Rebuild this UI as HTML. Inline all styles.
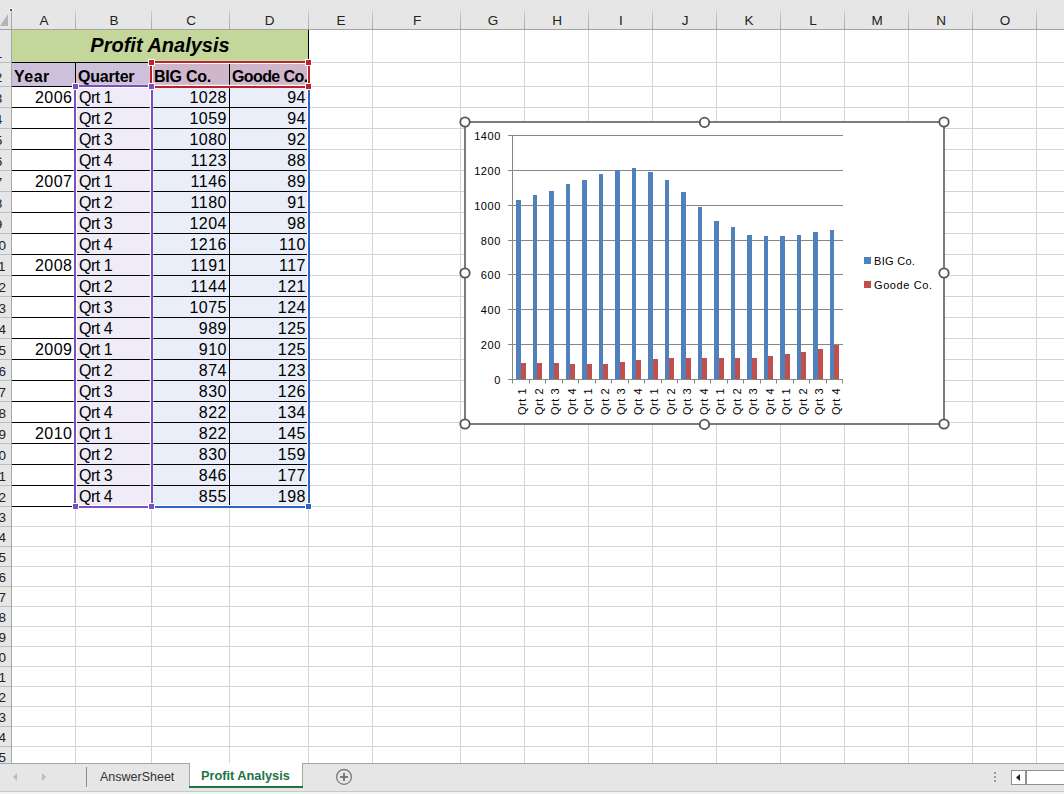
<!DOCTYPE html>
<html><head><meta charset="utf-8"><style>
html,body{margin:0;padding:0;}
body{width:1064px;height:794px;position:relative;overflow:hidden;background:#fff;font-family:"Liberation Sans",sans-serif;}
body>div{position:absolute;box-sizing:content-box;}
.t{white-space:nowrap;color:#000;line-height:1.15;}
.ch{font-size:13.5px;text-align:center;color:#222;}
.rh{font-size:13.5px;text-align:center;color:#222;}
.ax{font-family:"Liberation Sans",sans-serif;font-size:11px;letter-spacing:0.3px;fill:#000;}
.ay{font-family:"Liberation Sans",sans-serif;font-size:11px;letter-spacing:0.6px;fill:#000;}
.axl{font-family:"Liberation Sans",sans-serif;font-size:11px;letter-spacing:0.5px;fill:#000;}
</style></head><body>
<div style="left:0px;top:0px;width:1064px;height:29px;background:#e6e6e6"></div>
<div style="left:0px;top:29px;width:1064px;height:1px;background:#a3a3a3"></div>
<svg style="position:absolute;left:0;top:0" width="11" height="29"><polygon points="0,26 8,14 8,26" fill="#b4b4b4"/></svg>
<div style="left:0px;top:30px;width:11px;height:733px;background:#e6e6e6"></div>
<div style="left:11px;top:10px;width:1px;height:753px;background:#a6a6a6"></div>
<div style="left:10px;top:9px;width:2px;height:2px;background:#222;border-radius:50%;box-shadow:0 0 0 1px rgba(255,255,255,0.6)"></div>
<div style="left:75px;top:10px;width:1px;height:19px;background:linear-gradient(#d0d0d0,#a8a8a8)"></div>
<div style="left:151px;top:10px;width:1px;height:19px;background:linear-gradient(#d0d0d0,#a8a8a8)"></div>
<div style="left:229px;top:10px;width:1px;height:19px;background:linear-gradient(#d0d0d0,#a8a8a8)"></div>
<div style="left:308px;top:10px;width:1px;height:19px;background:linear-gradient(#d0d0d0,#a8a8a8)"></div>
<div style="left:372px;top:10px;width:1px;height:19px;background:linear-gradient(#d0d0d0,#a8a8a8)"></div>
<div style="left:460px;top:10px;width:1px;height:19px;background:linear-gradient(#d0d0d0,#a8a8a8)"></div>
<div style="left:524px;top:10px;width:1px;height:19px;background:linear-gradient(#d0d0d0,#a8a8a8)"></div>
<div style="left:588px;top:10px;width:1px;height:19px;background:linear-gradient(#d0d0d0,#a8a8a8)"></div>
<div style="left:652px;top:10px;width:1px;height:19px;background:linear-gradient(#d0d0d0,#a8a8a8)"></div>
<div style="left:716px;top:10px;width:1px;height:19px;background:linear-gradient(#d0d0d0,#a8a8a8)"></div>
<div style="left:780px;top:10px;width:1px;height:19px;background:linear-gradient(#d0d0d0,#a8a8a8)"></div>
<div style="left:844px;top:10px;width:1px;height:19px;background:linear-gradient(#d0d0d0,#a8a8a8)"></div>
<div style="left:908px;top:10px;width:1px;height:19px;background:linear-gradient(#d0d0d0,#a8a8a8)"></div>
<div style="left:972px;top:10px;width:1px;height:19px;background:linear-gradient(#d0d0d0,#a8a8a8)"></div>
<div style="left:1036px;top:10px;width:1px;height:19px;background:linear-gradient(#d0d0d0,#a8a8a8)"></div>
<div class="t ch" style="left:24.0px;top:13px;width:40px">A</div>
<div class="t ch" style="left:94.0px;top:13px;width:40px">B</div>
<div class="t ch" style="left:171.0px;top:13px;width:40px">C</div>
<div class="t ch" style="left:249.5px;top:13px;width:40px">D</div>
<div class="t ch" style="left:321.0px;top:13px;width:40px">E</div>
<div class="t ch" style="left:397.0px;top:13px;width:40px">F</div>
<div class="t ch" style="left:473.0px;top:13px;width:40px">G</div>
<div class="t ch" style="left:537.0px;top:13px;width:40px">H</div>
<div class="t ch" style="left:601.0px;top:13px;width:40px">I</div>
<div class="t ch" style="left:665.0px;top:13px;width:40px">J</div>
<div class="t ch" style="left:729.0px;top:13px;width:40px">K</div>
<div class="t ch" style="left:793.0px;top:13px;width:40px">L</div>
<div class="t ch" style="left:857.0px;top:13px;width:40px">M</div>
<div class="t ch" style="left:921.0px;top:13px;width:40px">N</div>
<div class="t ch" style="left:985.0px;top:13px;width:40px">O</div>
<div style="left:0px;top:62px;width:11px;height:1px;background:#bdbdbd"></div>
<div class="t rh" style="left:-21.5px;top:46px;width:40px">1</div>
<div style="left:0px;top:86px;width:11px;height:1px;background:#bdbdbd"></div>
<div class="t rh" style="left:-21.5px;top:70px;width:40px">2</div>
<div style="left:0px;top:107px;width:11px;height:1px;background:#bdbdbd"></div>
<div class="t rh" style="left:-21.5px;top:91px;width:40px">3</div>
<div style="left:0px;top:128px;width:11px;height:1px;background:#bdbdbd"></div>
<div class="t rh" style="left:-21.5px;top:112px;width:40px">4</div>
<div style="left:0px;top:149px;width:11px;height:1px;background:#bdbdbd"></div>
<div class="t rh" style="left:-21.5px;top:133px;width:40px">5</div>
<div style="left:0px;top:170px;width:11px;height:1px;background:#bdbdbd"></div>
<div class="t rh" style="left:-21.5px;top:154px;width:40px">6</div>
<div style="left:0px;top:191px;width:11px;height:1px;background:#bdbdbd"></div>
<div class="t rh" style="left:-21.5px;top:175px;width:40px">7</div>
<div style="left:0px;top:212px;width:11px;height:1px;background:#bdbdbd"></div>
<div class="t rh" style="left:-21.5px;top:196px;width:40px">8</div>
<div style="left:0px;top:233px;width:11px;height:1px;background:#bdbdbd"></div>
<div class="t rh" style="left:-21.5px;top:217px;width:40px">9</div>
<div style="left:0px;top:254px;width:11px;height:1px;background:#bdbdbd"></div>
<div class="t rh" style="left:-21.5px;top:238px;width:40px">10</div>
<div style="left:0px;top:275px;width:11px;height:1px;background:#bdbdbd"></div>
<div class="t rh" style="left:-21.5px;top:259px;width:40px">11</div>
<div style="left:0px;top:296px;width:11px;height:1px;background:#bdbdbd"></div>
<div class="t rh" style="left:-21.5px;top:280px;width:40px">12</div>
<div style="left:0px;top:317px;width:11px;height:1px;background:#bdbdbd"></div>
<div class="t rh" style="left:-21.5px;top:301px;width:40px">13</div>
<div style="left:0px;top:338px;width:11px;height:1px;background:#bdbdbd"></div>
<div class="t rh" style="left:-21.5px;top:322px;width:40px">14</div>
<div style="left:0px;top:359px;width:11px;height:1px;background:#bdbdbd"></div>
<div class="t rh" style="left:-21.5px;top:343px;width:40px">15</div>
<div style="left:0px;top:380px;width:11px;height:1px;background:#bdbdbd"></div>
<div class="t rh" style="left:-21.5px;top:364px;width:40px">16</div>
<div style="left:0px;top:401px;width:11px;height:1px;background:#bdbdbd"></div>
<div class="t rh" style="left:-21.5px;top:385px;width:40px">17</div>
<div style="left:0px;top:422px;width:11px;height:1px;background:#bdbdbd"></div>
<div class="t rh" style="left:-21.5px;top:406px;width:40px">18</div>
<div style="left:0px;top:443px;width:11px;height:1px;background:#bdbdbd"></div>
<div class="t rh" style="left:-21.5px;top:427px;width:40px">19</div>
<div style="left:0px;top:464px;width:11px;height:1px;background:#bdbdbd"></div>
<div class="t rh" style="left:-21.5px;top:448px;width:40px">20</div>
<div style="left:0px;top:485px;width:11px;height:1px;background:#bdbdbd"></div>
<div class="t rh" style="left:-21.5px;top:469px;width:40px">21</div>
<div style="left:0px;top:506px;width:11px;height:1px;background:#bdbdbd"></div>
<div class="t rh" style="left:-21.5px;top:490px;width:40px">22</div>
<div style="left:0px;top:526px;width:11px;height:1px;background:#bdbdbd"></div>
<div class="t rh" style="left:-21.5px;top:510px;width:40px">23</div>
<div style="left:0px;top:546px;width:11px;height:1px;background:#bdbdbd"></div>
<div class="t rh" style="left:-21.5px;top:530px;width:40px">24</div>
<div style="left:0px;top:566px;width:11px;height:1px;background:#bdbdbd"></div>
<div class="t rh" style="left:-21.5px;top:550px;width:40px">25</div>
<div style="left:0px;top:586px;width:11px;height:1px;background:#bdbdbd"></div>
<div class="t rh" style="left:-21.5px;top:570px;width:40px">26</div>
<div style="left:0px;top:606px;width:11px;height:1px;background:#bdbdbd"></div>
<div class="t rh" style="left:-21.5px;top:590px;width:40px">27</div>
<div style="left:0px;top:626px;width:11px;height:1px;background:#bdbdbd"></div>
<div class="t rh" style="left:-21.5px;top:610px;width:40px">28</div>
<div style="left:0px;top:646px;width:11px;height:1px;background:#bdbdbd"></div>
<div class="t rh" style="left:-21.5px;top:630px;width:40px">29</div>
<div style="left:0px;top:666px;width:11px;height:1px;background:#bdbdbd"></div>
<div class="t rh" style="left:-21.5px;top:650px;width:40px">30</div>
<div style="left:0px;top:686px;width:11px;height:1px;background:#bdbdbd"></div>
<div class="t rh" style="left:-21.5px;top:670px;width:40px">31</div>
<div style="left:0px;top:706px;width:11px;height:1px;background:#bdbdbd"></div>
<div class="t rh" style="left:-21.5px;top:690px;width:40px">32</div>
<div style="left:0px;top:726px;width:11px;height:1px;background:#bdbdbd"></div>
<div class="t rh" style="left:-21.5px;top:710px;width:40px">33</div>
<div style="left:0px;top:746px;width:11px;height:1px;background:#bdbdbd"></div>
<div class="t rh" style="left:-21.5px;top:730px;width:40px">34</div>
<div class="t rh" style="left:-21.5px;top:750px;width:40px">35</div>
<div class="t rh" style="left:-21.5px;top:770px;width:40px">36</div>
<div class="t rh" style="left:-21.5px;top:790px;width:40px">37</div>
<div style="left:12px;top:62px;width:1052px;height:1px;background:#d4d4d4"></div>
<div style="left:12px;top:86px;width:1052px;height:1px;background:#d4d4d4"></div>
<div style="left:12px;top:107px;width:1052px;height:1px;background:#d4d4d4"></div>
<div style="left:12px;top:128px;width:1052px;height:1px;background:#d4d4d4"></div>
<div style="left:12px;top:149px;width:1052px;height:1px;background:#d4d4d4"></div>
<div style="left:12px;top:170px;width:1052px;height:1px;background:#d4d4d4"></div>
<div style="left:12px;top:191px;width:1052px;height:1px;background:#d4d4d4"></div>
<div style="left:12px;top:212px;width:1052px;height:1px;background:#d4d4d4"></div>
<div style="left:12px;top:233px;width:1052px;height:1px;background:#d4d4d4"></div>
<div style="left:12px;top:254px;width:1052px;height:1px;background:#d4d4d4"></div>
<div style="left:12px;top:275px;width:1052px;height:1px;background:#d4d4d4"></div>
<div style="left:12px;top:296px;width:1052px;height:1px;background:#d4d4d4"></div>
<div style="left:12px;top:317px;width:1052px;height:1px;background:#d4d4d4"></div>
<div style="left:12px;top:338px;width:1052px;height:1px;background:#d4d4d4"></div>
<div style="left:12px;top:359px;width:1052px;height:1px;background:#d4d4d4"></div>
<div style="left:12px;top:380px;width:1052px;height:1px;background:#d4d4d4"></div>
<div style="left:12px;top:401px;width:1052px;height:1px;background:#d4d4d4"></div>
<div style="left:12px;top:422px;width:1052px;height:1px;background:#d4d4d4"></div>
<div style="left:12px;top:443px;width:1052px;height:1px;background:#d4d4d4"></div>
<div style="left:12px;top:464px;width:1052px;height:1px;background:#d4d4d4"></div>
<div style="left:12px;top:485px;width:1052px;height:1px;background:#d4d4d4"></div>
<div style="left:12px;top:506px;width:1052px;height:1px;background:#d4d4d4"></div>
<div style="left:12px;top:526px;width:1052px;height:1px;background:#d4d4d4"></div>
<div style="left:12px;top:546px;width:1052px;height:1px;background:#d4d4d4"></div>
<div style="left:12px;top:566px;width:1052px;height:1px;background:#d4d4d4"></div>
<div style="left:12px;top:586px;width:1052px;height:1px;background:#d4d4d4"></div>
<div style="left:12px;top:606px;width:1052px;height:1px;background:#d4d4d4"></div>
<div style="left:12px;top:626px;width:1052px;height:1px;background:#d4d4d4"></div>
<div style="left:12px;top:646px;width:1052px;height:1px;background:#d4d4d4"></div>
<div style="left:12px;top:666px;width:1052px;height:1px;background:#d4d4d4"></div>
<div style="left:12px;top:686px;width:1052px;height:1px;background:#d4d4d4"></div>
<div style="left:12px;top:706px;width:1052px;height:1px;background:#d4d4d4"></div>
<div style="left:12px;top:726px;width:1052px;height:1px;background:#d4d4d4"></div>
<div style="left:12px;top:746px;width:1052px;height:1px;background:#d4d4d4"></div>
<div style="left:75px;top:30px;width:1px;height:733px;background:#d4d4d4"></div>
<div style="left:151px;top:30px;width:1px;height:733px;background:#d4d4d4"></div>
<div style="left:229px;top:30px;width:1px;height:733px;background:#d4d4d4"></div>
<div style="left:308px;top:30px;width:1px;height:733px;background:#d4d4d4"></div>
<div style="left:372px;top:30px;width:1px;height:733px;background:#d4d4d4"></div>
<div style="left:460px;top:30px;width:1px;height:733px;background:#d4d4d4"></div>
<div style="left:524px;top:30px;width:1px;height:733px;background:#d4d4d4"></div>
<div style="left:588px;top:30px;width:1px;height:733px;background:#d4d4d4"></div>
<div style="left:652px;top:30px;width:1px;height:733px;background:#d4d4d4"></div>
<div style="left:716px;top:30px;width:1px;height:733px;background:#d4d4d4"></div>
<div style="left:780px;top:30px;width:1px;height:733px;background:#d4d4d4"></div>
<div style="left:844px;top:30px;width:1px;height:733px;background:#d4d4d4"></div>
<div style="left:908px;top:30px;width:1px;height:733px;background:#d4d4d4"></div>
<div style="left:972px;top:30px;width:1px;height:733px;background:#d4d4d4"></div>
<div style="left:1036px;top:30px;width:1px;height:733px;background:#d4d4d4"></div>
<div style="left:12px;top:30px;width:296px;height:32px;background:#c4d79b"></div>
<div style="left:308px;top:30px;width:1px;height:33px;background:#000"></div>
<div style="left:12px;top:62px;width:297px;height:1px;background:#000"></div>
<div style="left:12px;top:63px;width:139px;height:23px;background:#ccc0da"></div>
<div style="left:152px;top:63px;width:156px;height:23px;background:#cfb6cb"></div>
<div style="left:12px;top:87px;width:63px;height:419px;background:#fff"></div>
<div style="left:76px;top:87px;width:75px;height:419px;background:#efebf7"></div>
<div style="left:152px;top:87px;width:156px;height:419px;background:#e9eef9"></div>
<div style="left:12px;top:86px;width:297px;height:1px;background:#000"></div>
<div style="left:12px;top:107px;width:297px;height:1px;background:#000"></div>
<div style="left:12px;top:128px;width:297px;height:1px;background:#000"></div>
<div style="left:12px;top:149px;width:297px;height:1px;background:#000"></div>
<div style="left:12px;top:170px;width:297px;height:1px;background:#000"></div>
<div style="left:12px;top:191px;width:297px;height:1px;background:#000"></div>
<div style="left:12px;top:212px;width:297px;height:1px;background:#000"></div>
<div style="left:12px;top:233px;width:297px;height:1px;background:#000"></div>
<div style="left:12px;top:254px;width:297px;height:1px;background:#000"></div>
<div style="left:12px;top:275px;width:297px;height:1px;background:#000"></div>
<div style="left:12px;top:296px;width:297px;height:1px;background:#000"></div>
<div style="left:12px;top:317px;width:297px;height:1px;background:#000"></div>
<div style="left:12px;top:338px;width:297px;height:1px;background:#000"></div>
<div style="left:12px;top:359px;width:297px;height:1px;background:#000"></div>
<div style="left:12px;top:380px;width:297px;height:1px;background:#000"></div>
<div style="left:12px;top:401px;width:297px;height:1px;background:#000"></div>
<div style="left:12px;top:422px;width:297px;height:1px;background:#000"></div>
<div style="left:12px;top:443px;width:297px;height:1px;background:#000"></div>
<div style="left:12px;top:464px;width:297px;height:1px;background:#000"></div>
<div style="left:12px;top:485px;width:297px;height:1px;background:#000"></div>
<div style="left:12px;top:506px;width:297px;height:1px;background:#000"></div>
<div style="left:75px;top:62px;width:1px;height:445px;background:#000"></div>
<div style="left:151px;top:62px;width:1px;height:445px;background:#000"></div>
<div style="left:229px;top:62px;width:1px;height:445px;background:#000"></div>
<div style="left:308px;top:62px;width:1px;height:445px;background:#000"></div>
<div class="t" style="left:12px;top:34px;width:296px;text-align:center;font-weight:bold;font-style:italic;font-size:20px">Profit Analysis</div>
<div class="t" style="left:14px;top:68px;font-weight:bold;font-size:16px;letter-spacing:0.5px">Year</div>
<div class="t" style="left:78px;top:68px;font-weight:bold;font-size:16px;letter-spacing:-0.2px">Quarter</div>
<div class="t" style="left:154px;top:68px;font-weight:bold;font-size:16px;letter-spacing:-0.25px">BIG Co.</div>
<div class="t" style="left:232px;top:68px;font-weight:bold;font-size:16px;letter-spacing:-0.6px">Goode Co.</div>
<div class="t" style="left:12px;top:89px;font-size:16px;width:60.5px;text-align:right;letter-spacing:0.5px">2006</div>
<div class="t" style="left:79px;top:89px;font-size:16px;letter-spacing:-0.45px">Qrt 1</div>
<div class="t" style="left:152px;top:89px;font-size:16px;width:75px;text-align:right;letter-spacing:0.5px">1028</div>
<div class="t" style="left:230px;top:89px;font-size:16px;width:76px;text-align:right;letter-spacing:0.5px">94</div>
<div class="t" style="left:79px;top:110px;font-size:16px;letter-spacing:-0.45px">Qrt 2</div>
<div class="t" style="left:152px;top:110px;font-size:16px;width:75px;text-align:right;letter-spacing:0.5px">1059</div>
<div class="t" style="left:230px;top:110px;font-size:16px;width:76px;text-align:right;letter-spacing:0.5px">94</div>
<div class="t" style="left:79px;top:131px;font-size:16px;letter-spacing:-0.45px">Qrt 3</div>
<div class="t" style="left:152px;top:131px;font-size:16px;width:75px;text-align:right;letter-spacing:0.5px">1080</div>
<div class="t" style="left:230px;top:131px;font-size:16px;width:76px;text-align:right;letter-spacing:0.5px">92</div>
<div class="t" style="left:79px;top:152px;font-size:16px;letter-spacing:-0.45px">Qrt 4</div>
<div class="t" style="left:152px;top:152px;font-size:16px;width:75px;text-align:right;letter-spacing:0.5px">1123</div>
<div class="t" style="left:230px;top:152px;font-size:16px;width:76px;text-align:right;letter-spacing:0.5px">88</div>
<div class="t" style="left:12px;top:173px;font-size:16px;width:60.5px;text-align:right;letter-spacing:0.5px">2007</div>
<div class="t" style="left:79px;top:173px;font-size:16px;letter-spacing:-0.45px">Qrt 1</div>
<div class="t" style="left:152px;top:173px;font-size:16px;width:75px;text-align:right;letter-spacing:0.5px">1146</div>
<div class="t" style="left:230px;top:173px;font-size:16px;width:76px;text-align:right;letter-spacing:0.5px">89</div>
<div class="t" style="left:79px;top:194px;font-size:16px;letter-spacing:-0.45px">Qrt 2</div>
<div class="t" style="left:152px;top:194px;font-size:16px;width:75px;text-align:right;letter-spacing:0.5px">1180</div>
<div class="t" style="left:230px;top:194px;font-size:16px;width:76px;text-align:right;letter-spacing:0.5px">91</div>
<div class="t" style="left:79px;top:215px;font-size:16px;letter-spacing:-0.45px">Qrt 3</div>
<div class="t" style="left:152px;top:215px;font-size:16px;width:75px;text-align:right;letter-spacing:0.5px">1204</div>
<div class="t" style="left:230px;top:215px;font-size:16px;width:76px;text-align:right;letter-spacing:0.5px">98</div>
<div class="t" style="left:79px;top:236px;font-size:16px;letter-spacing:-0.45px">Qrt 4</div>
<div class="t" style="left:152px;top:236px;font-size:16px;width:75px;text-align:right;letter-spacing:0.5px">1216</div>
<div class="t" style="left:230px;top:236px;font-size:16px;width:76px;text-align:right;letter-spacing:0.5px">110</div>
<div class="t" style="left:12px;top:257px;font-size:16px;width:60.5px;text-align:right;letter-spacing:0.5px">2008</div>
<div class="t" style="left:79px;top:257px;font-size:16px;letter-spacing:-0.45px">Qrt 1</div>
<div class="t" style="left:152px;top:257px;font-size:16px;width:75px;text-align:right;letter-spacing:0.5px">1191</div>
<div class="t" style="left:230px;top:257px;font-size:16px;width:76px;text-align:right;letter-spacing:0.5px">117</div>
<div class="t" style="left:79px;top:278px;font-size:16px;letter-spacing:-0.45px">Qrt 2</div>
<div class="t" style="left:152px;top:278px;font-size:16px;width:75px;text-align:right;letter-spacing:0.5px">1144</div>
<div class="t" style="left:230px;top:278px;font-size:16px;width:76px;text-align:right;letter-spacing:0.5px">121</div>
<div class="t" style="left:79px;top:299px;font-size:16px;letter-spacing:-0.45px">Qrt 3</div>
<div class="t" style="left:152px;top:299px;font-size:16px;width:75px;text-align:right;letter-spacing:0.5px">1075</div>
<div class="t" style="left:230px;top:299px;font-size:16px;width:76px;text-align:right;letter-spacing:0.5px">124</div>
<div class="t" style="left:79px;top:320px;font-size:16px;letter-spacing:-0.45px">Qrt 4</div>
<div class="t" style="left:152px;top:320px;font-size:16px;width:75px;text-align:right;letter-spacing:0.5px">989</div>
<div class="t" style="left:230px;top:320px;font-size:16px;width:76px;text-align:right;letter-spacing:0.5px">125</div>
<div class="t" style="left:12px;top:341px;font-size:16px;width:60.5px;text-align:right;letter-spacing:0.5px">2009</div>
<div class="t" style="left:79px;top:341px;font-size:16px;letter-spacing:-0.45px">Qrt 1</div>
<div class="t" style="left:152px;top:341px;font-size:16px;width:75px;text-align:right;letter-spacing:0.5px">910</div>
<div class="t" style="left:230px;top:341px;font-size:16px;width:76px;text-align:right;letter-spacing:0.5px">125</div>
<div class="t" style="left:79px;top:362px;font-size:16px;letter-spacing:-0.45px">Qrt 2</div>
<div class="t" style="left:152px;top:362px;font-size:16px;width:75px;text-align:right;letter-spacing:0.5px">874</div>
<div class="t" style="left:230px;top:362px;font-size:16px;width:76px;text-align:right;letter-spacing:0.5px">123</div>
<div class="t" style="left:79px;top:383px;font-size:16px;letter-spacing:-0.45px">Qrt 3</div>
<div class="t" style="left:152px;top:383px;font-size:16px;width:75px;text-align:right;letter-spacing:0.5px">830</div>
<div class="t" style="left:230px;top:383px;font-size:16px;width:76px;text-align:right;letter-spacing:0.5px">126</div>
<div class="t" style="left:79px;top:404px;font-size:16px;letter-spacing:-0.45px">Qrt 4</div>
<div class="t" style="left:152px;top:404px;font-size:16px;width:75px;text-align:right;letter-spacing:0.5px">822</div>
<div class="t" style="left:230px;top:404px;font-size:16px;width:76px;text-align:right;letter-spacing:0.5px">134</div>
<div class="t" style="left:12px;top:425px;font-size:16px;width:60.5px;text-align:right;letter-spacing:0.5px">2010</div>
<div class="t" style="left:79px;top:425px;font-size:16px;letter-spacing:-0.45px">Qrt 1</div>
<div class="t" style="left:152px;top:425px;font-size:16px;width:75px;text-align:right;letter-spacing:0.5px">822</div>
<div class="t" style="left:230px;top:425px;font-size:16px;width:76px;text-align:right;letter-spacing:0.5px">145</div>
<div class="t" style="left:79px;top:446px;font-size:16px;letter-spacing:-0.45px">Qrt 2</div>
<div class="t" style="left:152px;top:446px;font-size:16px;width:75px;text-align:right;letter-spacing:0.5px">830</div>
<div class="t" style="left:230px;top:446px;font-size:16px;width:76px;text-align:right;letter-spacing:0.5px">159</div>
<div class="t" style="left:79px;top:467px;font-size:16px;letter-spacing:-0.45px">Qrt 3</div>
<div class="t" style="left:152px;top:467px;font-size:16px;width:75px;text-align:right;letter-spacing:0.5px">846</div>
<div class="t" style="left:230px;top:467px;font-size:16px;width:76px;text-align:right;letter-spacing:0.5px">177</div>
<div class="t" style="left:79px;top:488px;font-size:16px;letter-spacing:-0.45px">Qrt 4</div>
<div class="t" style="left:152px;top:488px;font-size:16px;width:75px;text-align:right;letter-spacing:0.5px">855</div>
<div class="t" style="left:230px;top:488px;font-size:16px;width:76px;text-align:right;letter-spacing:0.5px">198</div>
<div style="left:149px;top:84px;width:160px;height:423px;border:1px solid rgba(255,255,255,0.2)"></div>
<div style="left:150px;top:85px;width:156px;height:419px;border:2px solid #3063c6"></div>
<div style="left:152px;top:87px;width:154px;height:417px;border:1px solid #fff"></div>
<div style="left:149px;top:60px;width:160px;height:27px;border:1px solid rgba(255,255,255,0.2)"></div>
<div style="left:150px;top:61px;width:156px;height:23px;border:2px solid #c0202b"></div>
<div style="left:152px;top:63px;width:154px;height:21px;border:1px solid #fff"></div>
<div style="left:73px;top:84px;width:79px;height:423px;border:1px solid rgba(255,255,255,0.2)"></div>
<div style="left:74px;top:85px;width:75px;height:419px;border:2px solid #7d50bf"></div>
<div style="left:76px;top:87px;width:73px;height:417px;border:1px solid #fff"></div>
<div style="left:148px;top:83px;width:5px;height:5px;border:1px solid #fff;background:#3063c6"></div>
<div style="left:305px;top:83px;width:5px;height:5px;border:1px solid #fff;background:#3063c6"></div>
<div style="left:148px;top:503px;width:5px;height:5px;border:1px solid #fff;background:#3063c6"></div>
<div style="left:305px;top:503px;width:5px;height:5px;border:1px solid #fff;background:#3063c6"></div>
<div style="left:148px;top:59px;width:5px;height:5px;border:1px solid #fff;background:#c0202b"></div>
<div style="left:305px;top:59px;width:5px;height:5px;border:1px solid #fff;background:#c0202b"></div>
<div style="left:148px;top:83px;width:5px;height:5px;border:1px solid #fff;background:#c0202b"></div>
<div style="left:305px;top:83px;width:5px;height:5px;border:1px solid #fff;background:#c0202b"></div>
<div style="left:72px;top:83px;width:5px;height:5px;border:1px solid #fff;background:#7d50bf"></div>
<div style="left:148px;top:83px;width:5px;height:5px;border:1px solid #fff;background:#7d50bf"></div>
<div style="left:72px;top:503px;width:5px;height:5px;border:1px solid #fff;background:#7d50bf"></div>
<div style="left:148px;top:503px;width:5px;height:5px;border:1px solid #fff;background:#7d50bf"></div>
<svg style="position:absolute;left:0;top:0" width="1064" height="794">
<rect x="465" y="122" width="479" height="302" fill="#fff" stroke="#5c5c5c" stroke-width="1.6"/>
<line x1="508" y1="379.5" x2="843" y2="379.5" stroke="#868686" stroke-width="1"/>
<text x="501" y="384.0" text-anchor="end" class="ay">0</text>
<line x1="508" y1="344.5" x2="843" y2="344.5" stroke="#868686" stroke-width="1"/>
<text x="501" y="349.0" text-anchor="end" class="ay">200</text>
<line x1="508" y1="309.5" x2="843" y2="309.5" stroke="#868686" stroke-width="1"/>
<text x="501" y="314.0" text-anchor="end" class="ay">400</text>
<line x1="508" y1="274.5" x2="843" y2="274.5" stroke="#868686" stroke-width="1"/>
<text x="501" y="279.0" text-anchor="end" class="ay">600</text>
<line x1="508" y1="240.5" x2="843" y2="240.5" stroke="#868686" stroke-width="1"/>
<text x="501" y="245.0" text-anchor="end" class="ay">800</text>
<line x1="508" y1="205.5" x2="843" y2="205.5" stroke="#868686" stroke-width="1"/>
<text x="501" y="210.0" text-anchor="end" class="ay">1000</text>
<line x1="508" y1="170.5" x2="843" y2="170.5" stroke="#868686" stroke-width="1"/>
<text x="501" y="175.0" text-anchor="end" class="ay">1200</text>
<line x1="508" y1="135.5" x2="843" y2="135.5" stroke="#868686" stroke-width="1"/>
<text x="501" y="140.0" text-anchor="end" class="ay">1400</text>
<line x1="512.5" y1="135" x2="512.5" y2="379.5" stroke="#868686" stroke-width="1"/>
<line x1="512.5" y1="379.5" x2="512.5" y2="383.5" stroke="#868686" stroke-width="1"/>
<line x1="529.5" y1="379.5" x2="529.5" y2="383.5" stroke="#868686" stroke-width="1"/>
<line x1="545.5" y1="379.5" x2="545.5" y2="383.5" stroke="#868686" stroke-width="1"/>
<line x1="562.5" y1="379.5" x2="562.5" y2="383.5" stroke="#868686" stroke-width="1"/>
<line x1="578.5" y1="379.5" x2="578.5" y2="383.5" stroke="#868686" stroke-width="1"/>
<line x1="595.5" y1="379.5" x2="595.5" y2="383.5" stroke="#868686" stroke-width="1"/>
<line x1="611.5" y1="379.5" x2="611.5" y2="383.5" stroke="#868686" stroke-width="1"/>
<line x1="628.5" y1="379.5" x2="628.5" y2="383.5" stroke="#868686" stroke-width="1"/>
<line x1="644.5" y1="379.5" x2="644.5" y2="383.5" stroke="#868686" stroke-width="1"/>
<line x1="661.5" y1="379.5" x2="661.5" y2="383.5" stroke="#868686" stroke-width="1"/>
<line x1="677.5" y1="379.5" x2="677.5" y2="383.5" stroke="#868686" stroke-width="1"/>
<line x1="694.5" y1="379.5" x2="694.5" y2="383.5" stroke="#868686" stroke-width="1"/>
<line x1="710.5" y1="379.5" x2="710.5" y2="383.5" stroke="#868686" stroke-width="1"/>
<line x1="727.5" y1="379.5" x2="727.5" y2="383.5" stroke="#868686" stroke-width="1"/>
<line x1="743.5" y1="379.5" x2="743.5" y2="383.5" stroke="#868686" stroke-width="1"/>
<line x1="760.5" y1="379.5" x2="760.5" y2="383.5" stroke="#868686" stroke-width="1"/>
<line x1="776.5" y1="379.5" x2="776.5" y2="383.5" stroke="#868686" stroke-width="1"/>
<line x1="793.5" y1="379.5" x2="793.5" y2="383.5" stroke="#868686" stroke-width="1"/>
<line x1="809.5" y1="379.5" x2="809.5" y2="383.5" stroke="#868686" stroke-width="1"/>
<line x1="826.5" y1="379.5" x2="826.5" y2="383.5" stroke="#868686" stroke-width="1"/>
<line x1="842.5" y1="379.5" x2="842.5" y2="383.5" stroke="#868686" stroke-width="1"/>
<rect x="516" y="200" width="5" height="179" fill="#4f81bd"/>
<rect x="521" y="363" width="5" height="16" fill="#c0504d"/>
<text transform="translate(526.05,388) rotate(-90)" text-anchor="end" class="axl">Qrt 1</text>
<rect x="533" y="195" width="4" height="184" fill="#4f81bd"/>
<rect x="537" y="363" width="5" height="16" fill="#c0504d"/>
<text transform="translate(542.55,388) rotate(-90)" text-anchor="end" class="axl">Qrt 2</text>
<rect x="549" y="191" width="5" height="188" fill="#4f81bd"/>
<rect x="554" y="363" width="5" height="16" fill="#c0504d"/>
<text transform="translate(559.05,388) rotate(-90)" text-anchor="end" class="axl">Qrt 3</text>
<rect x="566" y="184" width="4" height="195" fill="#4f81bd"/>
<rect x="570" y="364" width="5" height="15" fill="#c0504d"/>
<text transform="translate(575.55,388) rotate(-90)" text-anchor="end" class="axl">Qrt 4</text>
<rect x="582" y="180" width="5" height="199" fill="#4f81bd"/>
<rect x="587" y="364" width="5" height="15" fill="#c0504d"/>
<text transform="translate(592.05,388) rotate(-90)" text-anchor="end" class="axl">Qrt 1</text>
<rect x="599" y="174" width="4" height="205" fill="#4f81bd"/>
<rect x="603" y="364" width="5" height="15" fill="#c0504d"/>
<text transform="translate(608.55,388) rotate(-90)" text-anchor="end" class="axl">Qrt 2</text>
<rect x="615" y="170" width="5" height="209" fill="#4f81bd"/>
<rect x="620" y="362" width="5" height="17" fill="#c0504d"/>
<text transform="translate(625.05,388) rotate(-90)" text-anchor="end" class="axl">Qrt 3</text>
<rect x="632" y="168" width="4" height="211" fill="#4f81bd"/>
<rect x="636" y="360" width="5" height="19" fill="#c0504d"/>
<text transform="translate(641.55,388) rotate(-90)" text-anchor="end" class="axl">Qrt 4</text>
<rect x="648" y="172" width="5" height="207" fill="#4f81bd"/>
<rect x="653" y="359" width="5" height="20" fill="#c0504d"/>
<text transform="translate(658.05,388) rotate(-90)" text-anchor="end" class="axl">Qrt 1</text>
<rect x="665" y="180" width="4" height="199" fill="#4f81bd"/>
<rect x="669" y="358" width="5" height="21" fill="#c0504d"/>
<text transform="translate(674.55,388) rotate(-90)" text-anchor="end" class="axl">Qrt 2</text>
<rect x="681" y="192" width="5" height="187" fill="#4f81bd"/>
<rect x="686" y="358" width="5" height="21" fill="#c0504d"/>
<text transform="translate(691.05,388) rotate(-90)" text-anchor="end" class="axl">Qrt 3</text>
<rect x="698" y="207" width="4" height="172" fill="#4f81bd"/>
<rect x="702" y="358" width="5" height="21" fill="#c0504d"/>
<text transform="translate(707.55,388) rotate(-90)" text-anchor="end" class="axl">Qrt 4</text>
<rect x="714" y="221" width="5" height="158" fill="#4f81bd"/>
<rect x="719" y="358" width="5" height="21" fill="#c0504d"/>
<text transform="translate(724.05,388) rotate(-90)" text-anchor="end" class="axl">Qrt 1</text>
<rect x="731" y="227" width="4" height="152" fill="#4f81bd"/>
<rect x="735" y="358" width="5" height="21" fill="#c0504d"/>
<text transform="translate(740.55,388) rotate(-90)" text-anchor="end" class="axl">Qrt 2</text>
<rect x="747" y="235" width="5" height="144" fill="#4f81bd"/>
<rect x="752" y="358" width="5" height="21" fill="#c0504d"/>
<text transform="translate(757.05,388) rotate(-90)" text-anchor="end" class="axl">Qrt 3</text>
<rect x="764" y="236" width="4" height="143" fill="#4f81bd"/>
<rect x="768" y="356" width="5" height="23" fill="#c0504d"/>
<text transform="translate(773.55,388) rotate(-90)" text-anchor="end" class="axl">Qrt 4</text>
<rect x="780" y="236" width="5" height="143" fill="#4f81bd"/>
<rect x="785" y="354" width="5" height="25" fill="#c0504d"/>
<text transform="translate(790.05,388) rotate(-90)" text-anchor="end" class="axl">Qrt 1</text>
<rect x="797" y="235" width="4" height="144" fill="#4f81bd"/>
<rect x="801" y="352" width="5" height="27" fill="#c0504d"/>
<text transform="translate(806.55,388) rotate(-90)" text-anchor="end" class="axl">Qrt 2</text>
<rect x="813" y="232" width="5" height="147" fill="#4f81bd"/>
<rect x="818" y="349" width="5" height="30" fill="#c0504d"/>
<text transform="translate(823.05,388) rotate(-90)" text-anchor="end" class="axl">Qrt 3</text>
<rect x="830" y="230" width="4" height="149" fill="#4f81bd"/>
<rect x="834" y="345" width="5" height="34" fill="#c0504d"/>
<text transform="translate(839.55,388) rotate(-90)" text-anchor="end" class="axl">Qrt 4</text>
<rect x="864" y="257" width="7" height="7" fill="#4f81bd"/>
<text x="874" y="265" class="ax">BIG Co.</text>
<rect x="864" y="281" width="7" height="7" fill="#c0504d"/>
<text x="874" y="289" class="ax" style="letter-spacing:0.6px">Goode Co.</text>
<circle cx="465" cy="122" r="4.7" fill="#fff" stroke="#555" stroke-width="1.8"/>
<circle cx="704.5" cy="122.4" r="4.7" fill="#fff" stroke="#555" stroke-width="1.8"/>
<circle cx="944" cy="122" r="4.7" fill="#fff" stroke="#555" stroke-width="1.8"/>
<circle cx="465" cy="273" r="4.7" fill="#fff" stroke="#555" stroke-width="1.8"/>
<circle cx="944" cy="273" r="4.7" fill="#fff" stroke="#555" stroke-width="1.8"/>
<circle cx="465" cy="424" r="4.7" fill="#fff" stroke="#555" stroke-width="1.8"/>
<circle cx="704.5" cy="424.4" r="4.7" fill="#fff" stroke="#555" stroke-width="1.8"/>
<circle cx="944" cy="424" r="4.7" fill="#fff" stroke="#555" stroke-width="1.8"/>
</svg>
<div style="left:0px;top:763px;width:1064px;height:31px;background:#e6e6e6"></div>
<div style="left:0px;top:763px;width:1064px;height:1px;background:#a6a6a6"></div>
<div style="left:0px;top:791px;width:1064px;height:1px;background:#c8c8c8"></div>
<div style="left:0px;top:792px;width:1064px;height:2px;background:#f3f3f3"></div>
<svg style="position:absolute;left:0px;top:763px" width="120" height="31"><polygon points="17,10 17,18 13,14" fill="#bcbcbc"/><polygon points="42,10 42,18 46,14" fill="#bcbcbc"/></svg>
<div style="left:86px;top:767px;width:1px;height:20px;background:#8c8c8c"></div>
<div class="t" style="left:100px;top:770px;font-size:12.5px;color:#333">AnswerSheet</div>
<div style="left:189px;top:763px;width:114px;height:24px;background:#fff"></div>
<div style="left:189px;top:763px;width:1px;height:25px;background:#a6a6a6"></div>
<div style="left:302px;top:763px;width:1px;height:25px;background:#a6a6a6"></div>
<div style="left:189px;top:786px;width:114px;height:2px;background:#217346"></div>
<div class="t" style="left:201px;top:769px;font-size:12.75px;font-weight:bold;color:#217346">Profit Analysis</div>
<svg style="position:absolute;left:330px;top:763px" width="30" height="31"><circle cx="14" cy="13.9" r="7.4" fill="none" stroke="#7a7a7a" stroke-width="1.3"/><line x1="14" y1="10" x2="14" y2="18" stroke="#6e6e6e" stroke-width="1.8"/><line x1="10" y1="14" x2="18" y2="14" stroke="#6e6e6e" stroke-width="1.8"/></svg>
<div style="left:994px;top:772px;width:2px;height:2px;background:#9a9a9a"></div>
<div style="left:994px;top:776px;width:2px;height:2px;background:#9a9a9a"></div>
<div style="left:994px;top:780px;width:2px;height:2px;background:#9a9a9a"></div>
<div style="left:1011px;top:770px;width:70px;height:15px;background:#fff;border:1px solid #8f8f8f;box-sizing:border-box"></div>
<div style="left:1025px;top:770px;width:2px;height:15px;background:#8f8f8f"></div>
<svg style="position:absolute;left:1011px;top:770px" width="14" height="15"><polygon points="5,7.5 9,4 9,11" fill="#222"/></svg>
</body></html>
